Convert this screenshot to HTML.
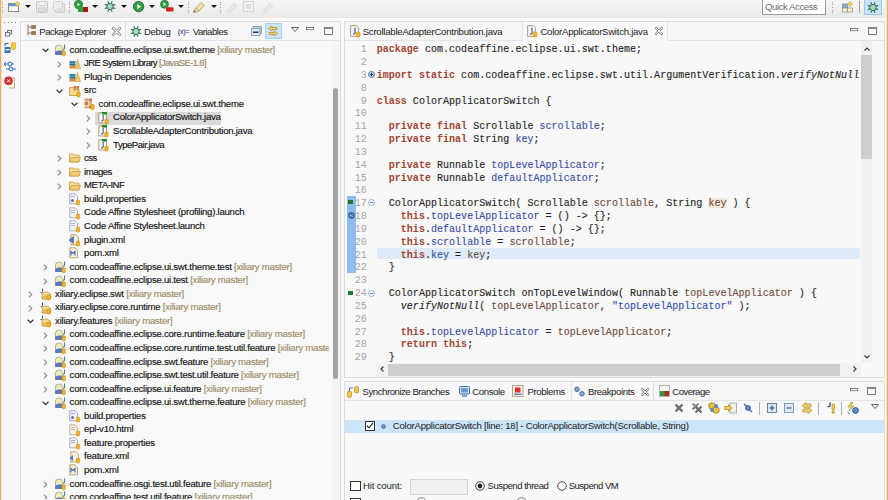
<!DOCTYPE html><html><head><meta charset="utf-8"><style>
html,body{margin:0;padding:0;}
body{width:888px;height:500px;overflow:hidden;position:relative;background:#f8f8f8;font-family:"Liberation Sans", sans-serif;font-size:9px;color:#1a1a1a;}
.t{position:absolute;white-space:pre;font-family:"Liberation Sans", sans-serif;font-size:9.6px;letter-spacing:-0.25px;line-height:12px;color:#141414;-webkit-text-stroke:0.15px currentColor;}
.c{position:absolute;white-space:pre;font-family:"Liberation Mono", monospace;font-size:10px;letter-spacing:0.03px;line-height:13px;color:#262626;-webkit-text-stroke:0.12px currentColor;}
.k{color:#a24434;font-weight:bold;-webkit-text-stroke:0;}
.f{color:#3a4ca6;}
.s{color:#2f4fb0;}
.p{color:#6e4a3c;}
.occ{background:linear-gradient(#f4e7dc 0,#f4e7dc 90%,transparent 90%);}
.q{color:#9a8b64;}
.ln{position:absolute;font-family:"Liberation Mono", monospace;font-size:10px;line-height:13px;color:#a4a4a4;text-align:right;width:22px;}
svg{position:absolute;overflow:visible;}
</style></head><body>
<div style="position:absolute;left:0px;top:0px;width:888px;height:18px;background:linear-gradient(#f5f5f5,#f1f1f1 40%,#e9e9e9);"></div>
<div style="position:absolute;left:0px;top:18px;width:888px;height:3px;background:#f9f9f9;"></div>
<div style="position:absolute;left:0px;top:0px;width:1px;height:500px;background:#e9b06a;"></div>
<div style="position:absolute;left:1px;top:0px;width:1px;height:500px;background:#f5e0c4;"></div>
<div style="position:absolute;left:886px;top:0px;width:1px;height:500px;background:#f5e0c4;"></div>
<div style="position:absolute;left:887px;top:0px;width:1px;height:500px;background:#e9b06a;"></div>
<div style="position:absolute;left:2px;top:21px;width:18px;height:479px;background:#f6f6f8;"></div>
<div style="position:absolute;left:20px;top:21px;width:321px;height:481px;background:#f9f9f9;border:1px solid #dcdcdc;box-sizing:border-box;"></div>
<div style="position:absolute;left:21px;top:22px;width:319px;height:18px;background:#f7f7f9;border-bottom:1px solid #e4e4e4;"></div>
<div style="position:absolute;left:21px;top:41px;width:308px;height:458px;overflow:hidden;">
<svg style="left:20.50px;top:7.00px" width="7" height="5" viewBox="0 0 7 5"><path d="M0.6 0.8 L3.5 3.7 L6.4 0.8" fill="none" stroke="#3c3c3c" stroke-width="1.3"/></svg>
<svg style="left:33.50px;top:3.00px" width="12" height="12" viewBox="0 0 12 12"><path d="M0.5 10.5 L0.5 4 Q0.5 1.2 3.5 1.2 L5.5 1.2 Q6.5 1.2 7 2.5 L8 4 L8 10.5 Z" fill="#eeeab8" stroke="#a0a088" stroke-width="0.8"/><path d="M0.6 10.5 L0.6 8 Q3 6.2 8 7 L8 10.5 Z" fill="#5a78c8" stroke="#4060a8" stroke-width="0.5"/><path d="M9.6 0.5 L9.6 4.2 Q9.6 5.6 8.2 5.2" fill="none" stroke="#3a5a9a" stroke-width="0.9"/><rect x="7" y="6.8" width="3.4" height="5" rx="1.1" fill="#f0b229" stroke="#c88a10" stroke-width="0.5"/></svg>
<div class="t" style="left:48.60px;top:2.67px;">com.codeaffine.eclipse.ui.swt.theme<span class="q"> [xiliary master]</span></div>
<svg style="left:36.00px;top:19.56px" width="5" height="7" viewBox="0 0 5 7"><path d="M0.8 0.6 L3.7 3.5 L0.8 6.4" fill="none" stroke="#8e8e8e" stroke-width="1.2"/></svg>
<svg style="left:48.00px;top:16.56px" width="12" height="12" viewBox="0 0 12 12"><rect x="0.5" y="3" width="6" height="2.5" fill="#2f8aa8"/><rect x="0.5" y="5.5" width="6" height="2.2" fill="#2b6f8c"/><rect x="0.5" y="7.7" width="6" height="2.8" fill="#d9893a"/><path d="M6.5 10.5 L8.5 1.5 L11.5 10.5 Z" fill="#f0c86a" stroke="#c89a3a" stroke-width="0.6"/></svg>
<div class="t" style="left:63.10px;top:16.23px;letter-spacing:-0.660px;">JRE System Library<span class="q"> [JavaSE-1.8]</span></div>
<svg style="left:36.00px;top:33.12px" width="5" height="7" viewBox="0 0 5 7"><path d="M0.8 0.6 L3.7 3.5 L0.8 6.4" fill="none" stroke="#8e8e8e" stroke-width="1.2"/></svg>
<svg style="left:48.00px;top:30.12px" width="12" height="12" viewBox="0 0 12 12"><rect x="0.5" y="3" width="6" height="2.5" fill="#2f8aa8"/><rect x="0.5" y="5.5" width="6" height="2.2" fill="#2b6f8c"/><rect x="0.5" y="7.7" width="6" height="2.8" fill="#d9893a"/><path d="M6.5 10.5 L8.5 1.5 L11.5 10.5 Z" fill="#f0c86a" stroke="#c89a3a" stroke-width="0.6"/></svg>
<div class="t" style="left:63.10px;top:29.79px;letter-spacing:-0.340px;">Plug-in Dependencies</div>
<svg style="left:35.00px;top:47.68px" width="7" height="5" viewBox="0 0 7 5"><path d="M0.6 0.8 L3.5 3.7 L6.4 0.8" fill="none" stroke="#3c3c3c" stroke-width="1.3"/></svg>
<svg style="left:48.00px;top:43.68px" width="12" height="12" viewBox="0 0 12 12"><path d="M0.5 2.5 L4 2.5 L5 3.5 L10 3.5 L10 10.5 L0.5 10.5 Z" fill="#f6dc92" stroke="#c09040" stroke-width="0.8"/><rect x="4.5" y="1" width="2.5" height="2" fill="#c8783a"/><rect x="7.5" y="1" width="2.5" height="2" fill="#c8783a"/><rect x="4.5" y="3.5" width="2.5" height="2" fill="#d89050"/><rect x="7.5" y="3.5" width="2.5" height="2" fill="#d89050"/><rect x="7.8" y="7" width="3.4" height="5" rx="1.1" fill="#f0b229" stroke="#c88a10" stroke-width="0.5"/></svg>
<div class="t" style="left:63.10px;top:43.35px;">src</div>
<svg style="left:49.50px;top:61.24px" width="7" height="5" viewBox="0 0 7 5"><path d="M0.6 0.8 L3.5 3.7 L6.4 0.8" fill="none" stroke="#3c3c3c" stroke-width="1.3"/></svg>
<svg style="left:62.50px;top:57.24px" width="12" height="12" viewBox="0 0 12 12"><rect x="0.5" y="0.5" width="3.5" height="3" fill="#d0a070"/><rect x="4.5" y="0.5" width="3.5" height="3" fill="#c87840"/><rect x="0.5" y="4" width="3.5" height="3" fill="#c87840"/><rect x="4.5" y="4" width="3.5" height="3" fill="#e0b080"/><rect x="0.5" y="7.5" width="3.5" height="3" fill="#e0b080"/><rect x="4.5" y="7.5" width="3.5" height="3" fill="#c87840"/><rect x="6.8" y="6.5" width="3.4" height="5" rx="1.1" fill="#f0b229" stroke="#c88a10" stroke-width="0.5"/></svg>
<div class="t" style="left:77.60px;top:56.91px;">com.codeaffine.eclipse.ui.swt.theme</div>
<div style="position:absolute;left:74px;top:71.10px;width:126px;height:12.5px;background:#d9d9d9;"></div>
<svg style="left:65.00px;top:73.80px" width="5" height="7" viewBox="0 0 5 7"><path d="M0.8 0.6 L3.7 3.5 L0.8 6.4" fill="none" stroke="#8e8e8e" stroke-width="1.2"/></svg>
<svg style="left:77.00px;top:70.80px" width="12" height="12" viewBox="0 0 12 12"><path d="M0.8 0.8 L6.5 0.8 L8.5 2.8 L8.5 11 L0.8 11 Z" fill="#fbf7ee" stroke="#b09060" stroke-width="0.9"/><rect x="4" y="0" width="5" height="2.5" fill="#1e8a2e"/><path d="M5.2 3 L5.2 7.5 Q5.2 9.2 3.2 8.8" fill="none" stroke="#3060b0" stroke-width="1.1"/><rect x="6.8" y="7" width="3.4" height="5" rx="1.1" fill="#f0b229" stroke="#c88a10" stroke-width="0.5"/></svg>
<div class="t" style="left:92.10px;top:70.47px;">ColorApplicatorSwitch.java</div>
<svg style="left:65.00px;top:87.36px" width="5" height="7" viewBox="0 0 5 7"><path d="M0.8 0.6 L3.7 3.5 L0.8 6.4" fill="none" stroke="#8e8e8e" stroke-width="1.2"/></svg>
<svg style="left:77.00px;top:84.36px" width="12" height="12" viewBox="0 0 12 12"><path d="M0.8 0.8 L6.5 0.8 L8.5 2.8 L8.5 11 L0.8 11 Z" fill="#fbf7ee" stroke="#b09060" stroke-width="0.9"/><rect x="4" y="0" width="5" height="2.5" fill="#1e8a2e"/><path d="M5.2 3 L5.2 7.5 Q5.2 9.2 3.2 8.8" fill="none" stroke="#3060b0" stroke-width="1.1"/><rect x="6.8" y="7" width="3.4" height="5" rx="1.1" fill="#f0b229" stroke="#c88a10" stroke-width="0.5"/></svg>
<div class="t" style="left:92.10px;top:84.03px;">ScrollableAdapterContribution.java</div>
<svg style="left:65.00px;top:100.92px" width="5" height="7" viewBox="0 0 5 7"><path d="M0.8 0.6 L3.7 3.5 L0.8 6.4" fill="none" stroke="#8e8e8e" stroke-width="1.2"/></svg>
<svg style="left:77.00px;top:97.92px" width="12" height="12" viewBox="0 0 12 12"><path d="M0.8 0.8 L6.5 0.8 L8.5 2.8 L8.5 11 L0.8 11 Z" fill="#fbf7ee" stroke="#b09060" stroke-width="0.9"/><rect x="4" y="0" width="5" height="2.5" fill="#1e8a2e"/><path d="M5.2 3 L5.2 7.5 Q5.2 9.2 3.2 8.8" fill="none" stroke="#3060b0" stroke-width="1.1"/><rect x="6.8" y="7" width="3.4" height="5" rx="1.1" fill="#f0b229" stroke="#c88a10" stroke-width="0.5"/></svg>
<div class="t" style="left:92.10px;top:97.59px;letter-spacing:-0.510px;">TypePair.java</div>
<svg style="left:36.00px;top:114.48px" width="5" height="7" viewBox="0 0 5 7"><path d="M0.8 0.6 L3.7 3.5 L0.8 6.4" fill="none" stroke="#8e8e8e" stroke-width="1.2"/></svg>
<svg style="left:48.00px;top:111.48px" width="12" height="12" viewBox="0 0 12 12"><path d="M0.5 2 L4 2 L5 3 L10 3 L10 10 L0.5 10 Z" fill="#f7df9a" stroke="#c59a45" stroke-width="0.8"/><path d="M0.8 10 L2.5 5.5 L11.5 5.5 L10 10 Z" fill="#f3cf74" stroke="#c59a45" stroke-width="0.7"/></svg>
<div class="t" style="left:63.10px;top:111.15px;letter-spacing:-0.650px;">css</div>
<svg style="left:36.00px;top:128.04px" width="5" height="7" viewBox="0 0 5 7"><path d="M0.8 0.6 L3.7 3.5 L0.8 6.4" fill="none" stroke="#8e8e8e" stroke-width="1.2"/></svg>
<svg style="left:48.00px;top:125.04px" width="12" height="12" viewBox="0 0 12 12"><path d="M0.5 2 L4 2 L5 3 L10 3 L10 10 L0.5 10 Z" fill="#f7df9a" stroke="#c59a45" stroke-width="0.8"/><path d="M0.8 10 L2.5 5.5 L11.5 5.5 L10 10 Z" fill="#f3cf74" stroke="#c59a45" stroke-width="0.7"/></svg>
<div class="t" style="left:63.10px;top:124.71px;letter-spacing:-0.530px;">images</div>
<svg style="left:36.00px;top:141.60px" width="5" height="7" viewBox="0 0 5 7"><path d="M0.8 0.6 L3.7 3.5 L0.8 6.4" fill="none" stroke="#8e8e8e" stroke-width="1.2"/></svg>
<svg style="left:48.00px;top:138.60px" width="12" height="12" viewBox="0 0 12 12"><path d="M0.5 2 L4 2 L5 3 L10 3 L10 10 L0.5 10 Z" fill="#f7df9a" stroke="#c59a45" stroke-width="0.8"/><path d="M0.8 10 L2.5 5.5 L11.5 5.5 L10 10 Z" fill="#f3cf74" stroke="#c59a45" stroke-width="0.7"/></svg>
<div class="t" style="left:63.10px;top:138.27px;letter-spacing:-0.550px;">META-INF</div>
<svg style="left:48.00px;top:152.16px" width="12" height="12" viewBox="0 0 12 12"><path d="M0.8 0.8 L6 0.8 L8.5 3.3 L8.5 10.8 L0.8 10.8 Z" fill="#f4f4fa" stroke="#8a94b8" stroke-width="0.8"/><circle cx="3.5" cy="7.5" r="1.5" fill="#6a6ab0"/><rect x="2" y="3" width="4" height="1" fill="#a0a8c8"/><rect x="7.3" y="7" width="3.4" height="5" rx="1.1" fill="#f0b229" stroke="#c88a10" stroke-width="0.5"/></svg>
<div class="t" style="left:63.10px;top:151.83px;">build.properties</div>
<svg style="left:48.00px;top:165.72px" width="12" height="12" viewBox="0 0 12 12"><path d="M0.8 0.8 L6 0.8 L8.5 3.3 L8.5 10.8 L0.8 10.8 Z" fill="#f2f2f4" stroke="#9aa0b0" stroke-width="0.8"/><rect x="2" y="3" width="4" height="1" fill="#a8b0c8"/><rect x="2" y="5" width="4" height="1" fill="#a8b0c8"/><rect x="7.3" y="7" width="3.4" height="5" rx="1.1" fill="#f0b229" stroke="#c88a10" stroke-width="0.5"/></svg>
<div class="t" style="left:63.10px;top:165.39px;">Code Affine Stylesheet (profiling).launch</div>
<svg style="left:48.00px;top:179.28px" width="12" height="12" viewBox="0 0 12 12"><path d="M0.8 0.8 L6 0.8 L8.5 3.3 L8.5 10.8 L0.8 10.8 Z" fill="#f2f2f4" stroke="#9aa0b0" stroke-width="0.8"/><rect x="2" y="3" width="4" height="1" fill="#a8b0c8"/><rect x="2" y="5" width="4" height="1" fill="#a8b0c8"/><rect x="7.3" y="7" width="3.4" height="5" rx="1.1" fill="#f0b229" stroke="#c88a10" stroke-width="0.5"/></svg>
<div class="t" style="left:63.10px;top:178.95px;">Code Affine Stylesheet.launch</div>
<svg style="left:48.00px;top:192.84px" width="12" height="12" viewBox="0 0 12 12"><path d="M1.8 0.8 L7 0.8 L9.5 3.3 L9.5 10.8 L1.8 10.8 Z" fill="#f6f0e0" stroke="#b09060" stroke-width="0.8"/><path d="M0 6 L4.5 2.5 L4.5 9.5 Z" fill="#5a7ac0" stroke="#3a5a9a" stroke-width="0.6"/><rect x="7.3" y="7" width="3.4" height="5" rx="1.1" fill="#f0b229" stroke="#c88a10" stroke-width="0.5"/></svg>
<div class="t" style="left:63.10px;top:192.51px;">plugin.xml</div>
<svg style="left:48.00px;top:206.40px" width="12" height="12" viewBox="0 0 12 12"><path d="M0.8 0.8 L6 0.8 L8.5 3.3 L8.5 10.8 L0.8 10.8 Z" fill="#f6f0e0" stroke="#b09060" stroke-width="0.8"/><path d="M2 8.5 L2 4.5 L4 6.5 L6 4.5 L6 8.5" fill="none" stroke="#3a6ab0" stroke-width="1.1"/></svg>
<div class="t" style="left:63.10px;top:206.07px;">pom.xml</div>
<svg style="left:21.50px;top:222.96px" width="5" height="7" viewBox="0 0 5 7"><path d="M0.8 0.6 L3.7 3.5 L0.8 6.4" fill="none" stroke="#8e8e8e" stroke-width="1.2"/></svg>
<svg style="left:33.50px;top:219.96px" width="12" height="12" viewBox="0 0 12 12"><path d="M0.5 10.5 L0.5 4 Q0.5 1.2 3.5 1.2 L5.5 1.2 Q6.5 1.2 7 2.5 L8 4 L8 10.5 Z" fill="#eeeab8" stroke="#a0a088" stroke-width="0.8"/><path d="M0.6 10.5 L0.6 8 Q3 6.2 8 7 L8 10.5 Z" fill="#5a78c8" stroke="#4060a8" stroke-width="0.5"/><path d="M9.6 0.5 L9.6 4.2 Q9.6 5.6 8.2 5.2" fill="none" stroke="#3a5a9a" stroke-width="0.9"/><rect x="7" y="6.8" width="3.4" height="5" rx="1.1" fill="#f0b229" stroke="#c88a10" stroke-width="0.5"/></svg>
<div class="t" style="left:48.60px;top:219.63px;">com.codeaffine.eclipse.ui.swt.theme.test<span class="q"> [xiliary master]</span></div>
<svg style="left:21.50px;top:236.52px" width="5" height="7" viewBox="0 0 5 7"><path d="M0.8 0.6 L3.7 3.5 L0.8 6.4" fill="none" stroke="#8e8e8e" stroke-width="1.2"/></svg>
<svg style="left:33.50px;top:233.52px" width="12" height="12" viewBox="0 0 12 12"><path d="M0.5 10.5 L0.5 4 Q0.5 1.2 3.5 1.2 L5.5 1.2 Q6.5 1.2 7 2.5 L8 4 L8 10.5 Z" fill="#eeeab8" stroke="#a0a088" stroke-width="0.8"/><path d="M0.6 10.5 L0.6 8 Q3 6.2 8 7 L8 10.5 Z" fill="#5a78c8" stroke="#4060a8" stroke-width="0.5"/><path d="M9.6 0.5 L9.6 4.2 Q9.6 5.6 8.2 5.2" fill="none" stroke="#3a5a9a" stroke-width="0.9"/><rect x="7" y="6.8" width="3.4" height="5" rx="1.1" fill="#f0b229" stroke="#c88a10" stroke-width="0.5"/></svg>
<div class="t" style="left:48.60px;top:233.19px;">com.codeaffine.eclipse.ui.test<span class="q"> [xiliary master]</span></div>
<svg style="left:7.00px;top:250.08px" width="5" height="7" viewBox="0 0 5 7"><path d="M0.8 0.6 L3.7 3.5 L0.8 6.4" fill="none" stroke="#8e8e8e" stroke-width="1.2"/></svg>
<svg style="left:19.00px;top:247.08px" width="12" height="12" viewBox="0 0 12 12"><path d="M2.5 0.5 L2.5 3.5 Q2.5 5 0.5 4.6" fill="none" stroke="#3a5a9a" stroke-width="1"/><path d="M2 11 L2 6.5 Q2 4 4.5 4 L7 4 Q8 4 8.5 5 L10.5 6 L10.5 11 Z" fill="#f6d88a" stroke="#c09a50" stroke-width="0.8"/><path d="M2.3 11 L3.5 8 L11 8 L10.5 11 Z" fill="#f0c060" stroke="#c09a50" stroke-width="0.6"/><rect x="7" y="7" width="3.4" height="5" rx="1.1" fill="#f0b229" stroke="#c88a10" stroke-width="0.5"/></svg>
<div class="t" style="left:34.10px;top:246.75px;">xiliary.eclipse.swt<span class="q"> [xiliary master]</span></div>
<svg style="left:7.00px;top:263.64px" width="5" height="7" viewBox="0 0 5 7"><path d="M0.8 0.6 L3.7 3.5 L0.8 6.4" fill="none" stroke="#8e8e8e" stroke-width="1.2"/></svg>
<svg style="left:19.00px;top:260.64px" width="12" height="12" viewBox="0 0 12 12"><path d="M2.5 0.5 L2.5 3.5 Q2.5 5 0.5 4.6" fill="none" stroke="#3a5a9a" stroke-width="1"/><path d="M2 11 L2 6.5 Q2 4 4.5 4 L7 4 Q8 4 8.5 5 L10.5 6 L10.5 11 Z" fill="#f6d88a" stroke="#c09a50" stroke-width="0.8"/><path d="M2.3 11 L3.5 8 L11 8 L10.5 11 Z" fill="#f0c060" stroke="#c09a50" stroke-width="0.6"/><rect x="7" y="7" width="3.4" height="5" rx="1.1" fill="#f0b229" stroke="#c88a10" stroke-width="0.5"/></svg>
<div class="t" style="left:34.10px;top:260.31px;">xiliary.eclipse.core.runtime<span class="q"> [xiliary master]</span></div>
<svg style="left:6.00px;top:278.20px" width="7" height="5" viewBox="0 0 7 5"><path d="M0.6 0.8 L3.5 3.7 L6.4 0.8" fill="none" stroke="#3c3c3c" stroke-width="1.3"/></svg>
<svg style="left:19.00px;top:274.20px" width="12" height="12" viewBox="0 0 12 12"><path d="M2.5 0.5 L2.5 3.5 Q2.5 5 0.5 4.6" fill="none" stroke="#3a5a9a" stroke-width="1"/><path d="M2 11 L2 6.5 Q2 4 4.5 4 L7 4 Q8 4 8.5 5 L10.5 6 L10.5 11 Z" fill="#f6d88a" stroke="#c09a50" stroke-width="0.8"/><path d="M2.3 11 L3.5 8 L11 8 L10.5 11 Z" fill="#f0c060" stroke="#c09a50" stroke-width="0.6"/><rect x="7" y="7" width="3.4" height="5" rx="1.1" fill="#f0b229" stroke="#c88a10" stroke-width="0.5"/></svg>
<div class="t" style="left:34.10px;top:273.87px;">xiliary.features<span class="q"> [xiliary master]</span></div>
<svg style="left:21.50px;top:290.76px" width="5" height="7" viewBox="0 0 5 7"><path d="M0.8 0.6 L3.7 3.5 L0.8 6.4" fill="none" stroke="#8e8e8e" stroke-width="1.2"/></svg>
<svg style="left:33.50px;top:287.76px" width="12" height="12" viewBox="0 0 12 12"><path d="M0.5 10.5 L0.5 4 Q0.5 1.2 3.5 1.2 L5.5 1.2 Q6.5 1.2 7 2.5 L8 4 L8 10.5 Z" fill="#eeeab8" stroke="#a0a088" stroke-width="0.8"/><path d="M0.6 10.5 L0.6 8 Q3 6.2 8 7 L8 10.5 Z" fill="#5a78c8" stroke="#4060a8" stroke-width="0.5"/><path d="M9.6 0.5 L9.6 4.2 Q9.6 5.6 8.2 5.2" fill="none" stroke="#3a5a9a" stroke-width="0.9"/><rect x="7" y="6.8" width="3.4" height="5" rx="1.1" fill="#f0b229" stroke="#c88a10" stroke-width="0.5"/></svg>
<div class="t" style="left:48.60px;top:287.43px;">com.codeaffine.eclipse.core.runtime.feature<span class="q"> [xiliary master]</span></div>
<svg style="left:21.50px;top:304.32px" width="5" height="7" viewBox="0 0 5 7"><path d="M0.8 0.6 L3.7 3.5 L0.8 6.4" fill="none" stroke="#8e8e8e" stroke-width="1.2"/></svg>
<svg style="left:33.50px;top:301.32px" width="12" height="12" viewBox="0 0 12 12"><path d="M0.5 10.5 L0.5 4 Q0.5 1.2 3.5 1.2 L5.5 1.2 Q6.5 1.2 7 2.5 L8 4 L8 10.5 Z" fill="#eeeab8" stroke="#a0a088" stroke-width="0.8"/><path d="M0.6 10.5 L0.6 8 Q3 6.2 8 7 L8 10.5 Z" fill="#5a78c8" stroke="#4060a8" stroke-width="0.5"/><path d="M9.6 0.5 L9.6 4.2 Q9.6 5.6 8.2 5.2" fill="none" stroke="#3a5a9a" stroke-width="0.9"/><rect x="7" y="6.8" width="3.4" height="5" rx="1.1" fill="#f0b229" stroke="#c88a10" stroke-width="0.5"/></svg>
<div class="t" style="left:48.60px;top:300.99px;">com.codeaffine.eclipse.core.runtime.test.util.feature<span class="q"> [xiliary master]</span></div>
<svg style="left:21.50px;top:317.88px" width="5" height="7" viewBox="0 0 5 7"><path d="M0.8 0.6 L3.7 3.5 L0.8 6.4" fill="none" stroke="#8e8e8e" stroke-width="1.2"/></svg>
<svg style="left:33.50px;top:314.88px" width="12" height="12" viewBox="0 0 12 12"><path d="M0.5 10.5 L0.5 4 Q0.5 1.2 3.5 1.2 L5.5 1.2 Q6.5 1.2 7 2.5 L8 4 L8 10.5 Z" fill="#eeeab8" stroke="#a0a088" stroke-width="0.8"/><path d="M0.6 10.5 L0.6 8 Q3 6.2 8 7 L8 10.5 Z" fill="#5a78c8" stroke="#4060a8" stroke-width="0.5"/><path d="M9.6 0.5 L9.6 4.2 Q9.6 5.6 8.2 5.2" fill="none" stroke="#3a5a9a" stroke-width="0.9"/><rect x="7" y="6.8" width="3.4" height="5" rx="1.1" fill="#f0b229" stroke="#c88a10" stroke-width="0.5"/></svg>
<div class="t" style="left:48.60px;top:314.55px;">com.codeaffine.eclipse.swt.feature<span class="q"> [xiliary master]</span></div>
<svg style="left:21.50px;top:331.44px" width="5" height="7" viewBox="0 0 5 7"><path d="M0.8 0.6 L3.7 3.5 L0.8 6.4" fill="none" stroke="#8e8e8e" stroke-width="1.2"/></svg>
<svg style="left:33.50px;top:328.44px" width="12" height="12" viewBox="0 0 12 12"><path d="M0.5 10.5 L0.5 4 Q0.5 1.2 3.5 1.2 L5.5 1.2 Q6.5 1.2 7 2.5 L8 4 L8 10.5 Z" fill="#eeeab8" stroke="#a0a088" stroke-width="0.8"/><path d="M0.6 10.5 L0.6 8 Q3 6.2 8 7 L8 10.5 Z" fill="#5a78c8" stroke="#4060a8" stroke-width="0.5"/><path d="M9.6 0.5 L9.6 4.2 Q9.6 5.6 8.2 5.2" fill="none" stroke="#3a5a9a" stroke-width="0.9"/><rect x="7" y="6.8" width="3.4" height="5" rx="1.1" fill="#f0b229" stroke="#c88a10" stroke-width="0.5"/></svg>
<div class="t" style="left:48.60px;top:328.11px;">com.codeaffine.eclipse.swt.test.util.feature<span class="q"> [xiliary master]</span></div>
<svg style="left:21.50px;top:345.00px" width="5" height="7" viewBox="0 0 5 7"><path d="M0.8 0.6 L3.7 3.5 L0.8 6.4" fill="none" stroke="#8e8e8e" stroke-width="1.2"/></svg>
<svg style="left:33.50px;top:342.00px" width="12" height="12" viewBox="0 0 12 12"><path d="M0.5 10.5 L0.5 4 Q0.5 1.2 3.5 1.2 L5.5 1.2 Q6.5 1.2 7 2.5 L8 4 L8 10.5 Z" fill="#eeeab8" stroke="#a0a088" stroke-width="0.8"/><path d="M0.6 10.5 L0.6 8 Q3 6.2 8 7 L8 10.5 Z" fill="#5a78c8" stroke="#4060a8" stroke-width="0.5"/><path d="M9.6 0.5 L9.6 4.2 Q9.6 5.6 8.2 5.2" fill="none" stroke="#3a5a9a" stroke-width="0.9"/><rect x="7" y="6.8" width="3.4" height="5" rx="1.1" fill="#f0b229" stroke="#c88a10" stroke-width="0.5"/></svg>
<div class="t" style="left:48.60px;top:341.67px;">com.codeaffine.eclipse.ui.feature<span class="q"> [xiliary master]</span></div>
<svg style="left:20.50px;top:359.56px" width="7" height="5" viewBox="0 0 7 5"><path d="M0.6 0.8 L3.5 3.7 L6.4 0.8" fill="none" stroke="#3c3c3c" stroke-width="1.3"/></svg>
<svg style="left:33.50px;top:355.56px" width="12" height="12" viewBox="0 0 12 12"><path d="M0.5 10.5 L0.5 4 Q0.5 1.2 3.5 1.2 L5.5 1.2 Q6.5 1.2 7 2.5 L8 4 L8 10.5 Z" fill="#eeeab8" stroke="#a0a088" stroke-width="0.8"/><path d="M0.6 10.5 L0.6 8 Q3 6.2 8 7 L8 10.5 Z" fill="#5a78c8" stroke="#4060a8" stroke-width="0.5"/><path d="M9.6 0.5 L9.6 4.2 Q9.6 5.6 8.2 5.2" fill="none" stroke="#3a5a9a" stroke-width="0.9"/><rect x="7" y="6.8" width="3.4" height="5" rx="1.1" fill="#f0b229" stroke="#c88a10" stroke-width="0.5"/></svg>
<div class="t" style="left:48.60px;top:355.23px;">com.codeaffine.eclipse.ui.swt.theme.feature<span class="q"> [xiliary master]</span></div>
<svg style="left:48.00px;top:369.12px" width="12" height="12" viewBox="0 0 12 12"><path d="M0.8 0.8 L6 0.8 L8.5 3.3 L8.5 10.8 L0.8 10.8 Z" fill="#f4f4fa" stroke="#8a94b8" stroke-width="0.8"/><circle cx="3.5" cy="7.5" r="1.5" fill="#6a6ab0"/><rect x="2" y="3" width="4" height="1" fill="#a0a8c8"/><rect x="7.3" y="7" width="3.4" height="5" rx="1.1" fill="#f0b229" stroke="#c88a10" stroke-width="0.5"/></svg>
<div class="t" style="left:63.10px;top:368.79px;">build.properties</div>
<svg style="left:48.00px;top:382.68px" width="12" height="12" viewBox="0 0 12 12"><path d="M0.8 0.8 L6 0.8 L8.5 3.3 L8.5 10.8 L0.8 10.8 Z" fill="#f8f4ea" stroke="#b8a070" stroke-width="0.8"/><rect x="2" y="3" width="4" height="1" fill="#c8b890"/><rect x="2" y="5" width="4" height="1" fill="#c8b890"/><rect x="7.3" y="7" width="3.4" height="5" rx="1.1" fill="#f0b229" stroke="#c88a10" stroke-width="0.5"/></svg>
<div class="t" style="left:63.10px;top:382.35px;">epl-v10.html</div>
<svg style="left:48.00px;top:396.24px" width="12" height="12" viewBox="0 0 12 12"><path d="M0.8 0.8 L6 0.8 L8.5 3.3 L8.5 10.8 L0.8 10.8 Z" fill="#f2f2f4" stroke="#9aa0b0" stroke-width="0.8"/><rect x="2" y="3" width="4" height="1" fill="#a8b0c8"/><rect x="2" y="5" width="4" height="1" fill="#a8b0c8"/><rect x="7.3" y="7" width="3.4" height="5" rx="1.1" fill="#f0b229" stroke="#c88a10" stroke-width="0.5"/></svg>
<div class="t" style="left:63.10px;top:395.91px;">feature.properties</div>
<svg style="left:48.00px;top:409.80px" width="12" height="12" viewBox="0 0 12 12"><path d="M1.8 0.8 L7 0.8 L9.5 3.3 L9.5 10.8 L1.8 10.8 Z" fill="#f6f0e0" stroke="#b09060" stroke-width="0.8"/><path d="M0.5 7 L4 4 L4 10 Z" fill="#5a7ac0"/><rect x="7.3" y="7" width="3.4" height="5" rx="1.1" fill="#f0b229" stroke="#c88a10" stroke-width="0.5"/></svg>
<div class="t" style="left:63.10px;top:409.47px;">feature.xml</div>
<svg style="left:48.00px;top:423.36px" width="12" height="12" viewBox="0 0 12 12"><path d="M0.8 0.8 L6 0.8 L8.5 3.3 L8.5 10.8 L0.8 10.8 Z" fill="#f6f0e0" stroke="#b09060" stroke-width="0.8"/><path d="M2 8.5 L2 4.5 L4 6.5 L6 4.5 L6 8.5" fill="none" stroke="#3a6ab0" stroke-width="1.1"/></svg>
<div class="t" style="left:63.10px;top:423.03px;">pom.xml</div>
<svg style="left:21.50px;top:439.92px" width="5" height="7" viewBox="0 0 5 7"><path d="M0.8 0.6 L3.7 3.5 L0.8 6.4" fill="none" stroke="#8e8e8e" stroke-width="1.2"/></svg>
<svg style="left:33.50px;top:436.92px" width="12" height="12" viewBox="0 0 12 12"><path d="M0.5 10.5 L0.5 4 Q0.5 1.2 3.5 1.2 L5.5 1.2 Q6.5 1.2 7 2.5 L8 4 L8 10.5 Z" fill="#eeeab8" stroke="#a0a088" stroke-width="0.8"/><path d="M0.6 10.5 L0.6 8 Q3 6.2 8 7 L8 10.5 Z" fill="#5a78c8" stroke="#4060a8" stroke-width="0.5"/><path d="M9.6 0.5 L9.6 4.2 Q9.6 5.6 8.2 5.2" fill="none" stroke="#3a5a9a" stroke-width="0.9"/><rect x="7" y="6.8" width="3.4" height="5" rx="1.1" fill="#f0b229" stroke="#c88a10" stroke-width="0.5"/></svg>
<div class="t" style="left:48.60px;top:436.59px;">com.codeaffine.osgi.test.util.feature<span class="q"> [xiliary master]</span></div>
<svg style="left:21.50px;top:453.48px" width="5" height="7" viewBox="0 0 5 7"><path d="M0.8 0.6 L3.7 3.5 L0.8 6.4" fill="none" stroke="#8e8e8e" stroke-width="1.2"/></svg>
<svg style="left:33.50px;top:450.48px" width="12" height="12" viewBox="0 0 12 12"><path d="M0.5 10.5 L0.5 4 Q0.5 1.2 3.5 1.2 L5.5 1.2 Q6.5 1.2 7 2.5 L8 4 L8 10.5 Z" fill="#eeeab8" stroke="#a0a088" stroke-width="0.8"/><path d="M0.6 10.5 L0.6 8 Q3 6.2 8 7 L8 10.5 Z" fill="#5a78c8" stroke="#4060a8" stroke-width="0.5"/><path d="M9.6 0.5 L9.6 4.2 Q9.6 5.6 8.2 5.2" fill="none" stroke="#3a5a9a" stroke-width="0.9"/><rect x="7" y="6.8" width="3.4" height="5" rx="1.1" fill="#f0b229" stroke="#c88a10" stroke-width="0.5"/></svg>
<div class="t" style="left:48.60px;top:450.15px;">com.codeaffine.test.util.feature<span class="q"> [xiliary master]</span></div>
</div>
<div style="position:absolute;left:332px;top:41px;width:8px;height:459px;background:#f4f4f4;"></div>
<div style="position:absolute;left:333px;top:88px;width:5px;height:291px;background:#a3a3a3;border-radius:2.5px;"></div>
<div style="position:absolute;left:2px;top:1.5px;width:1px;height:1px;background:#9a9a9a;"></div>
<div style="position:absolute;left:2px;top:4.2px;width:1px;height:1px;background:#9a9a9a;"></div>
<div style="position:absolute;left:2px;top:6.9px;width:1px;height:1px;background:#9a9a9a;"></div>
<div style="position:absolute;left:2px;top:9.6px;width:1px;height:1px;background:#9a9a9a;"></div>
<div style="position:absolute;left:2px;top:12.3px;width:1px;height:1px;background:#9a9a9a;"></div>
<svg style="left:8px;top:3px" width="12" height="10" viewBox="0 0 12 10"><rect x="0.5" y="0.5" width="10" height="8" fill="#fbfbf5" stroke="#8a8a80" stroke-width="1"/><rect x="1" y="1" width="9" height="2.2" fill="#5a9ad8"/><circle cx="9.5" cy="1" r="2" fill="#e8d870" stroke="#b8a040" stroke-width="0.6"/></svg>
<svg style="left:25px;top:5px" width="6" height="3" viewBox="0 0 6 3"><path d="M0 0 L6 0 L3 3 Z" fill="#1a1a1a"/></svg>
<svg style="left:36px;top:1px" width="12" height="12" viewBox="0 0 12 12"><rect x="0.5" y="0.5" width="11" height="11" rx="1" fill="#ececec" stroke="#c8c8c8"/><rect x="3" y="0.5" width="6" height="4" fill="#f6f6f6" stroke="#cfcfcf" stroke-width="0.8"/><rect x="2.5" y="7" width="7" height="4" fill="#dedede" stroke="#c8c8c8" stroke-width="0.8"/></svg>
<svg style="left:53px;top:1px" width="12" height="12" viewBox="0 0 12 12"><rect x="2.5" y="2.5" width="9" height="9" rx="1" fill="#e6e6e6" stroke="#cdcdcd"/><rect x="0.5" y="0.5" width="9" height="9" rx="1" fill="#eeeeee" stroke="#d2d2d2"/><rect x="4" y="7" width="6" height="4" fill="#dcdcdc"/></svg>
<div style="position:absolute;left:69px;top:1.5px;width:1px;height:1px;background:#c08080;"></div>
<div style="position:absolute;left:69px;top:4.2px;width:1px;height:1px;background:#c08080;"></div>
<div style="position:absolute;left:69px;top:6.9px;width:1px;height:1px;background:#c08080;"></div>
<div style="position:absolute;left:69px;top:9.6px;width:1px;height:1px;background:#c08080;"></div>
<div style="position:absolute;left:69px;top:12.3px;width:1px;height:1px;background:#c08080;"></div>
<svg style="left:74px;top:0px" width="14" height="12" viewBox="0 0 14 12"><circle cx="4.5" cy="4.5" r="4.2" fill="#2e9a3e" stroke="#1e6a2a" stroke-width="0.6"/><path d="M3.3 2.5 L6.5 4.5 L3.3 6.5Z" fill="#c8f0c0"/><rect x="4" y="7" width="5" height="5" fill="#27a83a"/><rect x="9" y="7" width="5" height="5" fill="#a81818"/></svg>
<svg style="left:92px;top:5px" width="6" height="3" viewBox="0 0 6 3"><path d="M0 0 L6 0 L3 3 Z" fill="#1a1a1a"/></svg>
<svg style="left:104px;top:0px" width="12" height="13" viewBox="0 0 12 13"><path d="M8.6 7.6 L11.2 8.6 M7.1 9.1 L8.1 11.7 M4.9 9.1 L3.9 11.7 M3.4 7.6 L0.8 8.6 M3.4 5.4 L0.8 4.4 M4.9 3.9 L3.9 1.3 M7.1 3.9 L8.1 1.3 M8.6 5.4 L11.2 4.4" stroke="#3a7a5a" stroke-width="1.2"/><circle cx="6" cy="6.5" r="3.2" fill="#a6d6bc" stroke="#2f6f50" stroke-width="1"/></svg>
<svg style="left:121px;top:5px" width="6" height="3" viewBox="0 0 6 3"><path d="M0 0 L6 0 L3 3 Z" fill="#1a1a1a"/></svg>
<svg style="left:133px;top:1px" width="12" height="12" viewBox="0 0 12 12"><circle cx="5.6" cy="5.6" r="5.2" fill="#2f9a46" stroke="#1d6b2e" stroke-width="0.9"/><path d="M4.2 2.8 L8.2 5.6 L4.2 8.4Z" fill="#d8f8c8"/></svg>
<svg style="left:149px;top:5px" width="6" height="3" viewBox="0 0 6 3"><path d="M0 0 L6 0 L3 3 Z" fill="#1a1a1a"/></svg>
<svg style="left:160px;top:0px" width="14" height="12" viewBox="0 0 14 12"><circle cx="4.5" cy="4.3" r="4" fill="#2f9a46" stroke="#1d6b2e" stroke-width="0.7"/><path d="M3.3 2.3 L6.4 4.3 L3.3 6.3Z" fill="#d8f8c8"/><rect x="6" y="7.3" width="7.5" height="4.2" rx="1.2" fill="#d82020"/></svg>
<svg style="left:178px;top:5px" width="6" height="3" viewBox="0 0 6 3"><path d="M0 0 L6 0 L3 3 Z" fill="#1a1a1a"/></svg>
<div style="position:absolute;left:188px;top:1.5px;width:1px;height:1px;background:#9a9a9a;"></div>
<div style="position:absolute;left:188px;top:4.2px;width:1px;height:1px;background:#9a9a9a;"></div>
<div style="position:absolute;left:188px;top:6.9px;width:1px;height:1px;background:#9a9a9a;"></div>
<div style="position:absolute;left:188px;top:9.6px;width:1px;height:1px;background:#9a9a9a;"></div>
<div style="position:absolute;left:188px;top:12.3px;width:1px;height:1px;background:#9a9a9a;"></div>
<svg style="left:193px;top:1px" width="13" height="12" viewBox="0 0 13 12"><path d="M1 9 L8 1.5 L11.5 4.5 L4.5 11.5 Z" fill="#efe0b0" stroke="#b0986a" stroke-width="0.8"/><path d="M1 9 L0 12 L3.5 11 Z" fill="#8a7a5a"/><path d="M3 7 L6 10" stroke="#a08860" stroke-width="0.8"/></svg>
<svg style="left:211px;top:5px" width="6" height="3" viewBox="0 0 6 3"><path d="M0 0 L6 0 L3 3 Z" fill="#1a1a1a"/></svg>
<div style="position:absolute;left:220px;top:1.5px;width:1px;height:1px;background:#9a9a9a;"></div>
<div style="position:absolute;left:220px;top:4.2px;width:1px;height:1px;background:#9a9a9a;"></div>
<div style="position:absolute;left:220px;top:6.9px;width:1px;height:1px;background:#9a9a9a;"></div>
<div style="position:absolute;left:220px;top:9.6px;width:1px;height:1px;background:#9a9a9a;"></div>
<div style="position:absolute;left:220px;top:12.3px;width:1px;height:1px;background:#9a9a9a;"></div>
<svg style="left:226px;top:1px" width="12" height="12" viewBox="0 0 12 12"><path d="M1 10 L8 2 L11 5 L3 12 Z" fill="#e8e8e8" stroke="#d8d8d8" stroke-width="0.8"/></svg>
<svg style="left:243px;top:1px" width="11" height="11" viewBox="0 0 11 11"><rect x="0.5" y="0.5" width="10" height="10" fill="#f2f2f2" stroke="#d4d4d4"/><rect x="3" y="3" width="5" height="5" fill="#dedede"/></svg>
<svg style="left:262px;top:1px" width="11" height="12" viewBox="0 0 11 12"><path d="M1 10 L8 2 L11 5 L3 12 Z" fill="#e8e8e8" stroke="#d8d8d8" stroke-width="0.8"/></svg>
<div style="position:absolute;left:762px;top:0px;width:64px;height:15px;background:#ffffff;border:1px solid #9a9a9a;border-top:none;box-sizing:border-box;"></div>
<div class="t" style="left:765px;top:1.17px;font-size:9.6px;letter-spacing:-0.427px;color:#6a6a6a;-webkit-text-stroke:0;">Quick Access</div>
<div style="position:absolute;left:832px;top:1.5px;width:1px;height:1px;background:#9a9a9a;"></div>
<div style="position:absolute;left:832px;top:4.2px;width:1px;height:1px;background:#9a9a9a;"></div>
<div style="position:absolute;left:832px;top:6.9px;width:1px;height:1px;background:#9a9a9a;"></div>
<div style="position:absolute;left:832px;top:9.6px;width:1px;height:1px;background:#9a9a9a;"></div>
<div style="position:absolute;left:832px;top:12.3px;width:1px;height:1px;background:#9a9a9a;"></div>
<svg style="left:842px;top:1px" width="12" height="12" viewBox="0 0 12 12"><rect x="0.5" y="3" width="5" height="4" fill="#7ab0e0" stroke="#8a8a70" stroke-width="0.7"/><rect x="0.5" y="7" width="5" height="4" fill="#f8f0d0" stroke="#8a8a70" stroke-width="0.7"/><rect x="5.5" y="7" width="5" height="4" fill="#f8f0d0" stroke="#8a8a70" stroke-width="0.7"/><path d="M8 0.5 L10.5 3 L8 5.5 L5.5 3Z" fill="#f0d060" stroke="#b09030" stroke-width="0.6"/></svg>
<div style="position:absolute;left:859px;top:1px;width:1px;height:12px;background:#a0a0a0;"></div>
<div style="position:absolute;left:864px;top:0px;width:18px;height:15px;background:#cce4f7;border:1px solid #99c9ef;border-top:none;box-sizing:border-box;"></div>
<svg style="left:867px;top:1px" width="12" height="12" viewBox="0 0 12 12"><path d="M8.6 7.6 L11.2 8.6 M7.1 9.1 L8.1 11.7 M4.9 9.1 L3.9 11.7 M3.4 7.6 L0.8 8.6 M3.4 5.4 L0.8 4.4 M4.9 3.9 L3.9 1.3 M7.1 3.9 L8.1 1.3 M8.6 5.4 L11.2 4.4" stroke="#3a7a5a" stroke-width="1.2"/><circle cx="6" cy="6.5" r="3.2" fill="#a6d6bc" stroke="#2f6f50" stroke-width="1"/></svg>
<div style="position:absolute;left:4.0px;top:22px;width:1px;height:1px;background:#8a8a8a;"></div>
<div style="position:absolute;left:7.5px;top:22px;width:1px;height:1px;background:#8a8a8a;"></div>
<div style="position:absolute;left:11.0px;top:22px;width:1px;height:1px;background:#8a8a8a;"></div>
<div style="position:absolute;left:14.5px;top:22px;width:1px;height:1px;background:#8a8a8a;"></div>
<svg style="left:5px;top:30px" width="7" height="7" viewBox="0 0 7 7"><rect x="2.5" y="0.5" width="4" height="3.5" fill="#f4f4f4" stroke="#6a6a6a" stroke-width="0.9"/><rect x="0.5" y="2.5" width="4" height="3.5" fill="#f4f4f4" stroke="#6a6a6a" stroke-width="0.9"/></svg>
<svg style="left:4px;top:42px" width="12" height="12" viewBox="0 0 12 12"><rect x="0.5" y="5" width="6" height="6" fill="#3a70b8"/><rect x="1.5" y="7" width="4" height="1.5" fill="#f0f0f0"/><path d="M1 4 L1 1.5 L4.5 1.5" fill="none" stroke="#2a5a98" stroke-width="1"/><rect x="7.5" y="0.5" width="4" height="7" rx="1.8" fill="#f2d040" stroke="#c8a020" stroke-width="0.7"/></svg>
<svg style="left:4px;top:61px" width="12" height="11" viewBox="0 0 12 11"><path d="M0 3 L10 3 M2 8 L12 8" stroke="#2a70b8" stroke-width="1.2"/><circle cx="6" cy="3" r="2" fill="#e8f0f8" stroke="#2a70b8"/><circle cx="7" cy="8" r="2" fill="#e8f0f8" stroke="#2a70b8"/><path d="M0 3 L2 1 M0 3 L2 5" stroke="#2a70b8"/></svg>
<svg style="left:4px;top:76px" width="12" height="13" viewBox="0 0 12 13"><path d="M5 2 L10.5 2 L10.5 12 L5 12" fill="#fbf7ea" stroke="#c0a870" stroke-width="0.9"/><circle cx="4.5" cy="4.8" r="4" fill="#d83030" stroke="#a01818" stroke-width="0.6"/><path d="M3 3.3 L6 6.3 M6 3.3 L3 6.3" stroke="#fff" stroke-width="1"/></svg>
<svg style="left:27px;top:24px" width="10" height="12" viewBox="0 0 10 12"><path d="M1 0.5 L1 11.5" stroke="#8a7a6a" stroke-width="1"/><path d="M1 3 L4 3 M1 9 L4 9" stroke="#8a7a6a" stroke-width="1"/><rect x="4" y="1" width="5" height="4" rx="1" fill="#a07a50"/><rect x="4" y="7" width="5" height="4" rx="1" fill="#a07a50"/></svg>
<div class="t" style="left:39.3px;top:25.67px;font-size:9.6px;letter-spacing:-0.567px;color:#222222;-webkit-text-stroke:0;">Package Explorer</div>
<svg style="left:112px;top:27px" width="9" height="9" viewBox="0 0 9 9"><path d="M1.2 1.2 L7.8 7.8 M7.8 1.2 L1.2 7.8" stroke="#8e8e8e" stroke-width="2.8" stroke-linecap="round"/><path d="M1.2 1.2 L7.8 7.8 M7.8 1.2 L1.2 7.8" stroke="#fafafa" stroke-width="1.1" stroke-linecap="round"/></svg>
<div style="position:absolute;left:125px;top:22px;width:1px;height:19px;background:#e0e0e0;"></div>
<svg style="left:130px;top:25px" width="12" height="12" viewBox="0 0 12 12"><path d="M8.6 7.6 L11.2 8.6 M7.1 9.1 L8.1 11.7 M4.9 9.1 L3.9 11.7 M3.4 7.6 L0.8 8.6 M3.4 5.4 L0.8 4.4 M4.9 3.9 L3.9 1.3 M7.1 3.9 L8.1 1.3 M8.6 5.4 L11.2 4.4" stroke="#3a7a5a" stroke-width="1.2"/><circle cx="6" cy="6.5" r="3.2" fill="#a6d6bc" stroke="#2f6f50" stroke-width="1"/></svg>
<div class="t" style="left:143.9px;top:25.67px;font-size:9.6px;letter-spacing:-0.358px;color:#222222;-webkit-text-stroke:0;">Debug</div>
<div class="t" style="left:177.8px;top:26px;font-size:7px;color:#3a4a7a;">(x)=</div>
<div class="t" style="left:192.7px;top:25.67px;font-size:9.6px;letter-spacing:-0.490px;color:#222222;-webkit-text-stroke:0;">Variables</div>
<svg style="left:251px;top:26px" width="11" height="10" viewBox="0 0 11 10"><rect x="2" y="0.5" width="8.5" height="7" fill="#c8d8e8" stroke="#7890a8" stroke-width="0.8"/><rect x="0.5" y="2.5" width="8.5" height="7" fill="#e0e8f0" stroke="#7890a8" stroke-width="0.8"/><rect x="2" y="5.5" width="5.5" height="1.5" fill="#1a3a6a"/></svg>
<div style="position:absolute;left:265px;top:23px;width:17px;height:16px;background:#cce4f7;border:1px solid #a8d0f0;box-sizing:border-box;"></div>
<svg style="left:267px;top:25px" width="12" height="12" viewBox="0 0 12 12"><path d="M5 1 L1.5 3.5 L5 6 L5 4.5 L10 4.5 L10 2.5 L5 2.5Z" fill="#f4d060" stroke="#a88a30" stroke-width="0.7"/><path d="M7 6 L10.5 8.5 L7 11 L7 9.5 L2 9.5 L2 7.5 L7 7.5Z" fill="#f4d060" stroke="#a88a30" stroke-width="0.7"/></svg>
<svg style="left:291px;top:27px" width="8" height="5" viewBox="0 0 8 5"><path d="M0.5 0.5 L7.5 0.5 L4 4.5Z" fill="none" stroke="#555" stroke-width="0.9"/></svg>
<svg style="left:306px;top:27px" width="8" height="3" viewBox="0 0 8 3"><rect x="0.5" y="0.5" width="7" height="2.2" fill="#fff" stroke="#707070" stroke-width="0.9"/></svg>
<svg style="left:323.5px;top:27px" width="9" height="8" viewBox="0 0 9 8"><rect x="0.5" y="0.5" width="8" height="7" fill="none" stroke="#6a6a6a" stroke-width="0.9"/><rect x="0.5" y="0.5" width="8" height="1.5" fill="#8a8a8a"/></svg>
<div style="position:absolute;left:344px;top:21px;width:541px;height:357px;background:#f8f8f8;border:1px solid #dcdcdc;box-sizing:border-box;"></div>
<div style="position:absolute;left:345px;top:22px;width:539px;height:18px;background:#f7f7f9;border-bottom:1px solid #e4e4e4;"></div>
<div style="position:absolute;left:345px;top:22px;width:177px;height:18px;background:#f6f6f7;"></div>
<svg style="left:350px;top:25px" width="10" height="12" viewBox="0 0 10 12"><path d="M0.6 0.6 L6.5 0.6 L8.6 2.7 L8.6 11.4 L0.6 11.4 Z" fill="#fbf8f0" stroke="#a89070" stroke-width="0.9"/><path d="M5 2.5 L5 7.8 Q5 9.4 3 9" fill="none" stroke="#2a5aa8" stroke-width="1.1"/><rect x="6" y="7" width="4" height="5" rx="1.5" fill="#f2b731" stroke="#c98a12" stroke-width="0.6"/></svg>
<div class="t" style="left:362.7px;top:25.67px;font-size:9.6px;letter-spacing:-0.236px;color:#222222;-webkit-text-stroke:0;">ScrollableAdapterContribution.java</div>
<div style="position:absolute;left:522px;top:22px;width:146px;height:19px;background:#f9f9f9;border-left:1px solid #e2e2e2;border-right:1px solid #e2e2e2;box-sizing:border-box;"></div>
<svg style="left:527px;top:25px" width="10" height="12" viewBox="0 0 10 12"><path d="M0.6 0.6 L6.5 0.6 L8.6 2.7 L8.6 11.4 L0.6 11.4 Z" fill="#fbf8f0" stroke="#a89070" stroke-width="0.9"/><path d="M5 2.5 L5 7.8 Q5 9.4 3 9" fill="none" stroke="#2a5aa8" stroke-width="1.1"/><rect x="6" y="7" width="4" height="5" rx="1.5" fill="#f2b731" stroke="#c98a12" stroke-width="0.6"/></svg>
<div class="t" style="left:540.4px;top:25.67px;font-size:9.6px;letter-spacing:-0.261px;color:#222222;-webkit-text-stroke:0;">ColorApplicatorSwitch.java</div>
<svg style="left:655px;top:27px" width="8" height="8" viewBox="0 0 8 8"><path d="M1.2 1.2 L6.8 6.8 M6.8 1.2 L1.2 6.8" stroke="#8e8e8e" stroke-width="2.5" stroke-linecap="round"/><path d="M1.2 1.2 L6.8 6.8 M6.8 1.2 L1.2 6.8" stroke="#fafafa" stroke-width="1" stroke-linecap="round"/></svg>
<svg style="left:850px;top:28px" width="8" height="3" viewBox="0 0 8 3"><rect x="0.5" y="0.5" width="7" height="2.2" fill="#fff" stroke="#707070" stroke-width="0.9"/></svg>
<svg style="left:867.5px;top:27px" width="9" height="8" viewBox="0 0 9 8"><rect x="0.5" y="0.5" width="8" height="7" fill="none" stroke="#6a6a6a" stroke-width="0.9"/><rect x="0.5" y="0.5" width="8" height="1.5" fill="#8a8a8a"/></svg>
<div style="position:absolute;left:376.7px;top:247.8px;width:483.3px;height:11.6px;background:#dcebf7;"></div>
<div style="position:absolute;left:345px;top:41px;width:515px;height:322px;overflow:hidden;">
<div class="ln" style="left:-0.20px;top:2.33px;">1</div>
<div class="c" style="left:31.70px;top:2.33px;"><span class="k">package</span> com.codeaffine.eclipse.ui.swt.theme;</div>
<div class="ln" style="left:-0.20px;top:15.16px;">2</div>
<div class="ln" style="left:-0.20px;top:27.99px;">3</div>
<div class="c" style="left:31.70px;top:27.99px;"><span class="k">import</span> <span class="k">static</span> com.codeaffine.eclipse.swt.util.ArgumentVerification.<i>verifyNotNull</i>;</div>
<div class="ln" style="left:-0.20px;top:40.82px;">8</div>
<div class="ln" style="left:-0.20px;top:53.65px;">9</div>
<div class="c" style="left:31.70px;top:53.65px;"><span class="k">class</span> ColorApplicatorSwitch {</div>
<div class="ln" style="left:-0.20px;top:66.48px;">10</div>
<div class="ln" style="left:-0.20px;top:79.31px;">11</div>
<div class="c" style="left:31.70px;top:79.31px;">  <span class="k">private</span> <span class="k">final</span> Scrollable <span class="f">scrollable</span>;</div>
<div class="ln" style="left:-0.20px;top:92.14px;">12</div>
<div class="c" style="left:31.70px;top:92.14px;">  <span class="k">private</span> <span class="k">final</span> String <span class="f">key</span>;</div>
<div class="ln" style="left:-0.20px;top:104.97px;">13</div>
<div class="ln" style="left:-0.20px;top:117.80px;">14</div>
<div class="c" style="left:31.70px;top:117.80px;">  <span class="k">private</span> Runnable <span class="f">topLevelApplicator</span>;</div>
<div class="ln" style="left:-0.20px;top:130.63px;">15</div>
<div class="c" style="left:31.70px;top:130.63px;">  <span class="k">private</span> Runnable <span class="f">defaultApplicator</span>;</div>
<div class="ln" style="left:-0.20px;top:143.46px;">16</div>
<div class="ln" style="left:-0.20px;top:156.29px;">17</div>
<div class="c" style="left:31.70px;top:156.29px;">  ColorApplicatorSwitch( Scrollable <span class="p">scrollable</span>, String <span class="p occ">key</span> ) {</div>
<div class="ln" style="left:-0.20px;top:169.12px;">18</div>
<div class="c" style="left:31.70px;top:169.12px;">    <span class="k">this</span>.<span class="f">topLevelApplicator</span> = () -&gt; {};</div>
<div class="ln" style="left:-0.20px;top:181.95px;">19</div>
<div class="c" style="left:31.70px;top:181.95px;">    <span class="k">this</span>.<span class="f">defaultApplicator</span> = () -&gt; {};</div>
<div class="ln" style="left:-0.20px;top:194.78px;">20</div>
<div class="c" style="left:31.70px;top:194.78px;">    <span class="k">this</span>.<span class="f">scrollable</span> = <span class="p">scrollable</span>;</div>
<div class="ln" style="left:-0.20px;top:207.61px;">21</div>
<div class="c" style="left:31.70px;top:207.61px;">    <span class="k">this</span>.<span class="f">key</span> = <span class="p">key</span>;</div>
<div class="ln" style="left:-0.20px;top:220.44px;">22</div>
<div class="c" style="left:31.70px;top:220.44px;">  }</div>
<div class="ln" style="left:-0.20px;top:233.27px;">23</div>
<div class="ln" style="left:-0.20px;top:246.10px;">24</div>
<div class="c" style="left:31.70px;top:246.10px;">  ColorApplicatorSwitch onTopLevelWindow( Runnable <span class="p">topLevelApplicator</span> ) {</div>
<div class="ln" style="left:-0.20px;top:258.93px;">25</div>
<div class="c" style="left:31.70px;top:258.93px;">    <i>verifyNotNull</i>( <span class="p">topLevelApplicator</span>, <span class="s">"topLevelApplicator"</span> );</div>
<div class="ln" style="left:-0.20px;top:271.76px;">26</div>
<div class="ln" style="left:-0.20px;top:284.59px;">27</div>
<div class="c" style="left:31.70px;top:284.59px;">    <span class="k">this</span>.<span class="f">topLevelApplicator</span> = <span class="p">topLevelApplicator</span>;</div>
<div class="ln" style="left:-0.20px;top:297.42px;">28</div>
<div class="c" style="left:31.70px;top:297.42px;">    <span class="k">return</span> <span class="k">this</span>;</div>
<div class="ln" style="left:-0.20px;top:310.25px;">29</div>
<div class="c" style="left:31.70px;top:310.25px;">  }</div>
<div class="ln" style="left:-0.20px;top:323.08px;">30</div>
</div>
<div style="position:absolute;left:346.5px;top:196px;width:9.5px;height:77px;background:#8fbcee;"></div>
<div style="position:absolute;left:348px;top:200px;width:4.5px;height:3.5px;background:#1e7a2e;"></div>
<svg style="left:347.5px;top:211.5px" width="7" height="7" viewBox="0 0 7 7"><circle cx="3.5" cy="3.5" r="2.6" fill="#8fbcee" stroke="#2a4a8a" stroke-width="1.1"/><path d="M2.5 2 L4.8 3.5 L2.5 5" fill="none" stroke="#2a4a8a" stroke-width="0.8"/></svg>
<div style="position:absolute;left:348px;top:291px;width:4.5px;height:3.5px;background:#1e7a2e;"></div>
<svg style="left:367.5px;top:70.5px" width="7" height="7" viewBox="0 0 7 7"><circle cx="3.5" cy="3.5" r="3" fill="#c8dcf0" stroke="#4a70a8" stroke-width="0.9"/><path d="M1.8 3.5 L5.2 3.5 M3.5 1.8 L3.5 5.2" stroke="#203a70" stroke-width="1"/></svg>
<svg style="left:367.5px;top:198.5px" width="7" height="7" viewBox="0 0 7 7"><circle cx="3.5" cy="3.5" r="3" fill="#f4f8fc" stroke="#8aa0c0" stroke-width="0.8"/><path d="M1.8 3.5 L5.2 3.5" stroke="#4a6a9a" stroke-width="0.9"/></svg>
<svg style="left:367.5px;top:289.5px" width="7" height="7" viewBox="0 0 7 7"><circle cx="3.5" cy="3.5" r="3" fill="#f4f8fc" stroke="#8aa0c0" stroke-width="0.8"/><path d="M1.8 3.5 L5.2 3.5" stroke="#4a6a9a" stroke-width="0.9"/></svg>
<div style="position:absolute;left:861px;top:41px;width:11px;height:322px;background:#f0f0f0;"></div>
<div style="position:absolute;left:861px;top:55px;width:11px;height:104px;background:#cdcdcd;"></div>
<svg style="left:863.5px;top:47px" width="6" height="4" viewBox="0 0 6 4"><path d="M0.5 3.5 L3 1 L5.5 3.5" fill="none" stroke="#404040" stroke-width="1.2"/></svg>
<svg style="left:863.5px;top:355px" width="6" height="4" viewBox="0 0 6 4"><path d="M0.5 0.5 L3 3 L5.5 0.5" fill="none" stroke="#404040" stroke-width="1.2"/></svg>
<div style="position:absolute;left:872px;top:41px;width:12px;height:322px;background:#f7f7f7;"></div>
<div style="position:absolute;left:376px;top:363px;width:485px;height:14px;background:#f2f2f2;"></div>
<div style="position:absolute;left:388px;top:364px;width:452px;height:11.5px;background:#cdcdcd;"></div>
<svg style="left:380px;top:366px" width="4" height="6" viewBox="0 0 4 6"><path d="M3.5 0.5 L1 3 L3.5 5.5" fill="none" stroke="#404040" stroke-width="1.2"/></svg>
<svg style="left:852.5px;top:366px" width="4" height="6" viewBox="0 0 4 6"><path d="M0.5 0.5 L3 3 L0.5 5.5" fill="none" stroke="#404040" stroke-width="1.2"/></svg>
<div style="position:absolute;left:344px;top:381px;width:541px;height:121px;background:#f8f8f8;border:1px solid #dcdcdc;box-sizing:border-box;"></div>
<div style="position:absolute;left:345px;top:382px;width:539px;height:18px;background:#f7f7f9;border-bottom:1px solid #e4e4e4;"></div>
<svg style="left:347px;top:385.5px" width="12" height="12" viewBox="0 0 12 12"><rect x="0.5" y="5" width="4" height="6.5" rx="1.8" fill="#f2c840" stroke="#b08a20" stroke-width="0.7"/><rect x="7.5" y="0.5" width="4" height="6.5" rx="1.8" fill="#f2c840" stroke="#b08a20" stroke-width="0.7"/><path d="M2.5 5 L2.5 2 L6 2" fill="none" stroke="#4a6a9a" stroke-width="0.9"/></svg>
<div class="t" style="left:362.6px;top:385.67px;font-size:9.6px;letter-spacing:-0.468px;color:#222222;-webkit-text-stroke:0;">Synchronize Branches</div>
<svg style="left:459px;top:386px" width="11" height="11" viewBox="0 0 11 11"><rect x="0.5" y="0.5" width="10" height="7.5" rx="1" fill="#e0ecf8" stroke="#3a6aa8" stroke-width="1"/><rect x="2" y="2" width="7" height="4.5" fill="#6a9ad0"/><path d="M3 10 L8 10" stroke="#3a6aa8" stroke-width="1.2"/></svg>
<div class="t" style="left:472.3px;top:385.67px;font-size:9.6px;letter-spacing:-0.417px;color:#222222;-webkit-text-stroke:0;">Console</div>
<svg style="left:512px;top:385px" width="12" height="12" viewBox="0 0 12 12"><rect x="0.5" y="0.5" width="10.5" height="11" fill="#f8f0e0" stroke="#a89070" stroke-width="0.8"/><rect x="3" y="2.5" width="5.5" height="5" fill="#e03030"/><rect x="2" y="8.5" width="7.5" height="1.5" fill="#4a8ad0"/></svg>
<div class="t" style="left:527.4px;top:385.67px;font-size:9.6px;letter-spacing:-0.368px;color:#222222;-webkit-text-stroke:0;">Problems</div>
<div style="position:absolute;left:571px;top:382px;width:83px;height:18px;background:#f8f8f8;border-left:1px solid #e2e2e2;border-right:1px solid #e2e2e2;box-sizing:border-box;"></div>
<svg style="left:573.5px;top:386px" width="11" height="11" viewBox="0 0 11 11"><circle cx="3" cy="3.3" r="2.3" fill="#7aa6d8" stroke="#3a5a8a" stroke-width="0.8"/><circle cx="8" cy="7.8" r="2.3" fill="#7aa6d8" stroke="#3a5a8a" stroke-width="0.8"/></svg>
<div class="t" style="left:588px;top:385.67px;font-size:9.6px;letter-spacing:-0.391px;color:#222222;-webkit-text-stroke:0;">Breakpoints</div>
<svg style="left:641px;top:388px" width="8" height="8" viewBox="0 0 8 8"><path d="M1.2 1.2 L6.8 6.8 M6.8 1.2 L1.2 6.8" stroke="#8e8e8e" stroke-width="2.5" stroke-linecap="round"/><path d="M1.2 1.2 L6.8 6.8 M6.8 1.2 L1.2 6.8" stroke="#fafafa" stroke-width="1" stroke-linecap="round"/></svg>
<svg style="left:658.5px;top:385px" width="11" height="12" viewBox="0 0 11 12"><rect x="0.5" y="0.5" width="10" height="11" fill="#f4f4f4" stroke="#a0a0a0" stroke-width="0.8"/><rect x="1" y="6" width="9" height="5" fill="#2a9a3a"/><rect x="5.5" y="6" width="4.5" height="5" fill="#c02020"/></svg>
<div class="t" style="left:672.3px;top:385.67px;font-size:9.6px;letter-spacing:-0.553px;color:#222222;-webkit-text-stroke:0;">Coverage</div>
<svg style="left:850px;top:388px" width="8" height="3" viewBox="0 0 8 3"><rect x="0.5" y="0.5" width="7" height="2.2" fill="#fff" stroke="#707070" stroke-width="0.9"/></svg>
<svg style="left:867px;top:387px" width="9" height="8" viewBox="0 0 9 8"><rect x="0.5" y="0.5" width="8" height="7" fill="none" stroke="#6a6a6a" stroke-width="0.9"/><rect x="0.5" y="0.5" width="8" height="1.5" fill="#8a8a8a"/></svg>
<svg style="left:674px;top:403px" width="10" height="10" viewBox="0 0 10 10"><path d="M1.5 1.5 L8.5 8.5 M8.5 1.5 L1.5 8.5" stroke="#6a6a6a" stroke-width="2.4"/></svg>
<svg style="left:691px;top:402px" width="12" height="12" viewBox="0 0 12 12"><path d="M1.5 1.5 L7.5 7.5 M7.5 1.5 L1.5 7.5" stroke="#8a8a8a" stroke-width="2.2"/><path d="M4.5 4.5 L10.5 10.5 M10.5 4.5 L4.5 10.5" stroke="#6a6a6a" stroke-width="2.2"/></svg>
<svg style="left:708px;top:402px" width="12" height="12" viewBox="0 0 12 12"><circle cx="4" cy="4" r="3.3" fill="#f0c040" stroke="#a08020" stroke-width="0.8"/><circle cx="8" cy="8" r="3.3" fill="#f0c040" stroke="#a08020" stroke-width="0.8"/><circle cx="8" cy="4" r="2" fill="#5a8ac0"/><circle cx="4" cy="8" r="2" fill="#5a8ac0"/></svg>
<svg style="left:724px;top:402px" width="13" height="12" viewBox="0 0 13 12"><rect x="6" y="1" width="6.5" height="10" fill="#f4f0e8" stroke="#a0a0a0" stroke-width="0.8"/><path d="M0.5 4.5 L4.5 4.5 L4.5 2.5 L8 6 L4.5 9.5 L4.5 7.5 L0.5 7.5Z" fill="#f2c850" stroke="#a88a30" stroke-width="0.7"/></svg>
<svg style="left:743px;top:403px" width="10" height="10" viewBox="0 0 10 10"><path d="M1 1 L9 9" stroke="#3a6aa8" stroke-width="1.2"/><circle cx="5" cy="5" r="2.5" fill="#5a8ac0" stroke="#2a4a7a" stroke-width="0.7"/></svg>
<div style="position:absolute;left:759px;top:402px;width:1px;height:13px;background:#b0b0b0;"></div>
<svg style="left:767px;top:403px" width="10" height="10" viewBox="0 0 10 10"><rect x="0.5" y="0.5" width="9" height="9" fill="#dce8f4" stroke="#5a7aa0" stroke-width="0.9"/><path d="M2.5 5 L7.5 5 M5 2.5 L5 7.5" stroke="#2a3a5a" stroke-width="1.1"/></svg>
<svg style="left:784px;top:403px" width="10" height="10" viewBox="0 0 10 10"><rect x="0.5" y="0.5" width="9" height="9" fill="#dce8f4" stroke="#7a94b8" stroke-width="0.9"/><path d="M2.5 5 L7.5 5" stroke="#3a4a6a" stroke-width="1.1"/></svg>
<svg style="left:800.5px;top:402px" width="12" height="12" viewBox="0 0 12 12"><path d="M5 0.5 L1 3.5 L5 6.5 L5 5 L10 5 L10 2 L5 2Z" fill="#f4d060" stroke="#a88a30" stroke-width="0.7"/><path d="M7 5.5 L11 8.5 L7 11.5 L7 10 L2 10 L2 7 L7 7Z" fill="#f4d060" stroke="#a88a30" stroke-width="0.7"/></svg>
<div style="position:absolute;left:817.5px;top:402px;width:1px;height:13px;background:#b0b0b0;"></div>
<svg style="left:826px;top:402px" width="10" height="12" viewBox="0 0 10 12"><path d="M4 0.5 L4 3.5 Q4 5 1.5 4.5" fill="none" stroke="#2a3a5a" stroke-width="1.2"/><rect x="6" y="2" width="2.5" height="6" rx="1" fill="#f2c840" stroke="#a08020" stroke-width="0.6"/><circle cx="7.2" cy="10.2" r="1.3" fill="#f2c840" stroke="#a08020" stroke-width="0.6"/></svg>
<div style="position:absolute;left:841px;top:402px;width:1px;height:13px;background:#b0b0b0;"></div>
<svg style="left:847px;top:402px" width="12" height="12" viewBox="0 0 12 12"><path d="M4 0.5 L1 5 L4 5 L2 9 L7 4 L4.5 4 L6 0.5Z" fill="#f2d050" stroke="#8a9a30" stroke-width="0.6"/><circle cx="8.5" cy="8.5" r="3" fill="#5a8ac0" stroke="#2a4a7a" stroke-width="0.7"/><path d="M0.5 10 L3 12" stroke="#3a8a3a" stroke-width="1"/></svg>
<svg style="left:871px;top:404px" width="8" height="5" viewBox="0 0 8 5"><path d="M0.5 0.5 L7.5 0.5 L4 4.5Z" fill="none" stroke="#555" stroke-width="0.9"/></svg>
<div style="position:absolute;left:345px;top:419.5px;width:539px;height:13px;background:#cce4f7;"></div>
<div style="position:absolute;left:364.5px;top:420.5px;width:10.5px;height:10.5px;background:#fff;border:1px solid #333;box-sizing:border-box;"></div>
<svg style="left:366px;top:422px" width="8" height="7" viewBox="0 0 8 7"><path d="M0.8 3.5 L3 5.8 L7.2 0.8" fill="none" stroke="#222" stroke-width="1.1"/></svg>
<svg style="left:380.5px;top:423.5px" width="5" height="5" viewBox="0 0 5 5"><circle cx="2.5" cy="2.5" r="2" fill="#6a92c8" stroke="#3a5a8a" stroke-width="0.6"/></svg>
<div class="t" style="left:392.8px;top:420.17px;font-size:9.6px;letter-spacing:-0.240px;color:#222222;-webkit-text-stroke:0;">ColorApplicatorSwitch [line: 18] - ColorApplicatorSwitch(Scrollable, String)</div>
<div style="position:absolute;left:350px;top:480.5px;width:10.5px;height:10.5px;background:#fff;border:1px solid #333;box-sizing:border-box;"></div>
<div class="t" style="left:362.9px;top:480.17px;font-size:9.6px;letter-spacing:-0.145px;color:#222222;-webkit-text-stroke:0;">Hit count:</div>
<div style="position:absolute;left:410px;top:478.5px;width:58px;height:16px;background:#f0f0f0;border:1px solid #d4d4d4;box-sizing:border-box;"></div>
<svg style="left:475px;top:481px" width="10" height="10" viewBox="0 0 10 10"><circle cx="5" cy="5" r="4.3" fill="#fff" stroke="#333" stroke-width="0.9"/><circle cx="5" cy="5" r="2.4" fill="#222"/></svg>
<div class="t" style="left:487.6px;top:480.17px;font-size:9.6px;letter-spacing:-0.499px;color:#222222;-webkit-text-stroke:0;">Suspend thread</div>
<svg style="left:557px;top:481px" width="10" height="10" viewBox="0 0 10 10"><circle cx="5" cy="5" r="4.3" fill="#fff" stroke="#333" stroke-width="0.9"/></svg>
<div class="t" style="left:568.7px;top:480.17px;font-size:9.6px;letter-spacing:-0.537px;color:#222222;-webkit-text-stroke:0;">Suspend VM</div>
<div style="position:absolute;left:350px;top:498px;width:10.5px;height:3px;background:#fff;border:1px solid #333;border-bottom:none;box-sizing:border-box;"></div>
<svg style="left:416px;top:497px" width="11" height="5" viewBox="0 0 11 5"><circle cx="5.5" cy="5.5" r="4.8" fill="#fff" stroke="#777" stroke-width="1"/></svg>
<svg style="left:516px;top:497px" width="11" height="5" viewBox="0 0 11 5"><circle cx="5.5" cy="5.5" r="4.8" fill="#fff" stroke="#777" stroke-width="1"/></svg>
</body></html>
